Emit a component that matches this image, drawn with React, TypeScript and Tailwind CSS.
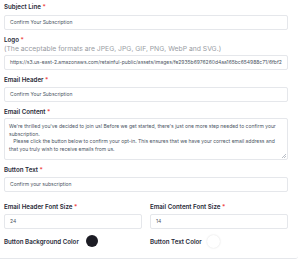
import React from 'react'

const Label = ({ text, required = true, className = '' }: { text: string; required?: boolean; className?: string }) => (
  <div className={`text-[6.2px] leading-[9px] font-semibold text-[#1f2937] ${className}`}>
    {text}
    {required && <span className="text-[#ef4444]"> *</span>}
  </div>
)

const Field = ({ value, className = '' }: { value: string; className?: string }) => (
  <div
    className={`h-[15px] border border-[#e5e7eb] rounded-[2px] bg-white px-[5px] flex items-center text-[5px] text-[#4b5563] whitespace-nowrap overflow-hidden ${className}`}
  >
    {value}
  </div>
)

const content =
  "We're thrilled you've decided to join us! Before we get started, there's just one more step needed to confirm your subscription.\n   Please click the button below to confirm your opt-in. This ensures that we have your correct email address and that you truly wish to receive emails from us."

export default function App() {
  return (
    <div className="w-[300px] h-[264px] bg-white overflow-hidden" style={{ fontFamily: 'Inter, "Liberation Sans", sans-serif' }}>
      <div className="w-[298px] border-b border-[#e5e7eb] rounded-br-[3px] pl-[4px] pr-[10px] pb-[11px]">
        <Label text="Subject Line" className="mt-[2px]" />
        <Field value="Confirm Your Subscription" className="mt-[4px]" />

        <Label text="Logo" className="mt-[5px]" />
        <div className="text-[6.8px] leading-[9px] text-[#999ca3]">
          (The acceptable formats are JPEG, JPG, GIF, PNG, WebP and SVG.)
        </div>
        <Field
          value="https://s3.us-east-2.amazonaws.com/retainful-public/assets/images/fe2935b6976260d4aa165bc654988c71/6fbf2"
          className="mt-[2px]"
        />

        <Label text="Email Header" className="mt-[5px]" />
        <Field value="Confirm Your Subscription" className="mt-[3px]" />

        <Label text="Email Content" className="mt-[5px]" />
        <div className="relative mt-[2px] h-[42px] border border-[#e5e7eb] rounded-[2px] px-[4px] pt-[4px] text-[5px] leading-[7.7px] text-[#4b5563] whitespace-pre-wrap overflow-hidden">
          {content}
          <svg className="absolute right-[1px] bottom-[1px]" width="4" height="4" viewBox="0 0 4 4">
            <path d="M4 0L0 4M4 2L2 4" stroke="#9ca3af" strokeWidth="0.7" />
          </svg>
        </div>

        <Label text="Button Text" className="mt-[5px]" />
        <Field value="Confirm your subscription" className="mt-[3px]" />

        <div className="grid grid-cols-2 gap-x-[8px] mt-[10px]">
          <div>
            <Label text="Email Header Font Size" />
            <Field value="24" className="mt-[3px]" />
          </div>
          <div>
            <Label text="Email Content Font Size" />
            <Field value="14" className="mt-[3px]" />
          </div>
          <div className="flex items-center gap-[7px] mt-[6px] h-[12px]">
            <Label text="Button Background Color" required={false} />
            <div className="w-[12px] h-[12px] rounded-full bg-[#1c1c24]" />
          </div>
          <div className="flex items-center gap-[5px] mt-[6px] h-[12px]">
            <Label text="Button Text Color" required={false} />
            <div className="w-[13px] h-[13px] rounded-full bg-white shadow-[0_0_2px_rgba(0,0,0,0.15)]" />
          </div>
        </div>
      </div>
    </div>
  )
}
